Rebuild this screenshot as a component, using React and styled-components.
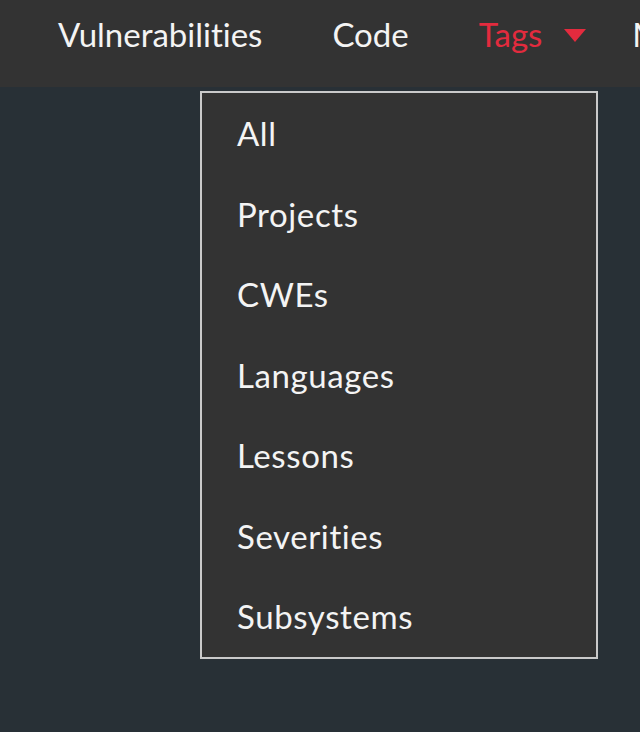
import React from "react";
import styled, { createGlobalStyle } from "styled-components";

const GlobalStyle = createGlobalStyle`
  html, body {
    margin: 0;
    padding: 0;
    background: #283036;
  }
  body {
    font-family: Lato, "Noto Sans", sans-serif;
    font-variant-ligatures: none;
    overflow: hidden;
  }
`;

const Page = styled.div`
  position: relative;
  width: 640px;
  height: 732px;
  background: #283036;
  overflow: hidden;
`;

const Header = styled.nav`
  display: flex;
  align-items: flex-start;
  height: 87px;
  box-sizing: border-box;
  padding: 18px 0 0 58px;
  background: #333333;
  white-space: nowrap;
`;

const NavItem = styled.a`
  display: flex;
  align-items: center;
  gap: 22px;
  margin-right: ${(p) => (p.$tight ? "46px" : "70px")};
  font-size: 33px;
  line-height: 33px;
  color: ${(p) => (p.$active ? "#e32b3e" : "#f4f4f4")};
  text-decoration: none;
  cursor: pointer;
`;

const Caret = styled.span`
  display: inline-block;
  width: 0;
  height: 0;
  margin-top: 2px;
  border-left: 11px solid transparent;
  border-right: 11px solid transparent;
  border-top: 13px solid #e32b3e;
`;

const Dropdown = styled.ul`
  position: absolute;
  top: 91px;
  left: 200px;
  width: 394px;
  margin: 0;
  padding: 0;
  list-style: none;
  background: #333333;
  border: 2px solid #cacaca;
`;

const MenuItem = styled.li`
  display: flex;
  align-items: center;
  height: 80.5px;
  padding-left: 35px;
  font-size: 33px;
  letter-spacing: 0.6px;
  color: #f4f4f4;
  cursor: pointer;
`;

const tags = ["All", "Projects", "CWEs", "Languages", "Lessons", "Severities", "Subsystems"];

export default function App() {
  return (
    <Page>
      <GlobalStyle />
      <Header>
        <NavItem>Vulnerabilities</NavItem>
        <NavItem>Code</NavItem>
        <NavItem $active $tight>
          Tags <Caret />
        </NavItem>
        <NavItem>More</NavItem>
      </Header>
      <Dropdown>
        {tags.map((t) => (
          <MenuItem key={t}>{t}</MenuItem>
        ))}
      </Dropdown>
    </Page>
  );
}
